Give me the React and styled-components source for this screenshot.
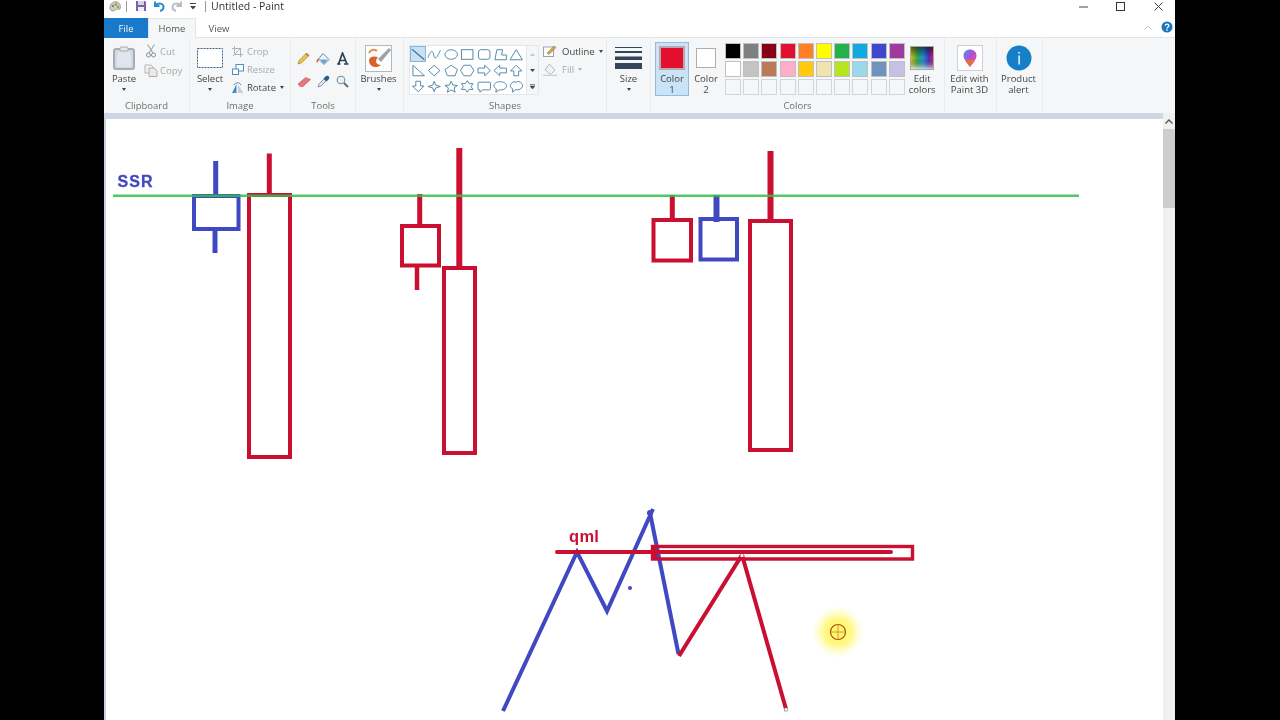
import styled, { createGlobalStyle } from 'styled-components';

const GlobalStyle = createGlobalStyle`
html, body {
  margin: 0;
  padding: 0;
  background: #000;
  overflow: hidden;
}
`

const Page = styled.div`
width: 1280px;
height: 720px;
background: #000;
overflow: hidden;
padding-left: 104px;
box-sizing: border-box;
`
const Window = styled.div`
width: 1071px;
height: 720px;
display: flex;
flex-direction: column;
background: #fff;
font-family: 'Open Sans', 'Liberation Sans', sans-serif;
font-size: 9.5px;
color: #444;
filter: blur(0.45px);
`
const TitleBar = styled.div`
height: 14px;
box-sizing: border-box;
padding: 0 0 2px 5px;
display: flex;
align-items: center;
flex: none;
`
const QuickIcon = styled.span`
display: flex;
width: ${p => p.$w || 18}px;
justify-content: center;
`
const TitleSep = styled.span`
width: 1px;
height: 11px;
background: #9a9a9a;
margin: 0 ${p => p.$m || 4}px;
`
const TitleText = styled.span`
font-size: 10.5px;
color: #333;
`
const WinControls = styled.div`
margin-left: auto;
display: flex;
align-items: center;
gap: 28.5px;
padding-right: 12.5px;
`
const TabRow = styled.div`
height: 24px;
display: flex;
align-items: flex-end;
flex: none;
box-sizing: border-box;
border-bottom: 1px solid #e3e4e5;
`
const FileTab = styled.div`
width: 44px;
height: 20px;
margin-bottom: -1px;
background: #1979ca;
color: #f2f7fc;
display: flex;
align-items: center;
justify-content: center;
`
const Tab = styled.div`
width: ${p => p.$w}px;
height: 20px;
margin-bottom: -1px;
box-sizing: border-box;
display: flex;
align-items: center;
justify-content: center;
color: #555;
background: ${p => (p.$active ? '#f5f6f7' : 'transparent')};
border: 1px solid ${p => (p.$active ? '#e3e4e5' : 'transparent')};
border-bottom: none;
`
const HelpArea = styled.div`
margin-left: auto;
height: 20px;
display: flex;
align-items: center;
gap: 9px;
padding-right: 2px;
`
const Ribbon = styled.div`
height: 75px;
flex: none;
display: flex;
background: #f5f6f7;
`
const Group = styled.div`
width: ${p => p.$w}px;
flex: none;
box-sizing: border-box;
display: flex;
flex-direction: column;
border-right: 1px solid #eaebec;
margin-bottom: 1px;
`
const GroupBody = styled.div`
height: 61px;
display: flex;
`
const GroupLabel = styled.div`
height: 13px;
line-height: 13px;
text-align: center;
color: #6f6f6f;
`
const LargeTool = styled.div`
width: ${p => p.$w || 40}px;
flex: none;
padding-top: 5px;
display: flex;
flex-direction: column;
align-items: center;
`
const IconSlot = styled.div`
height: 30px;
display: flex;
align-items: center;
justify-content: center;
`
const ToolLabel = styled.div`
line-height: 11px;
text-align: center;
color: #444;
white-space: pre-line;
`
const Caret = styled.div`
width: 0;
height: 0;
margin-top: 4px;
border-left: 2.5px solid transparent;
border-right: 2.5px solid transparent;
border-top: 3px solid #444;
`
const SmallCol = styled.div`
display: flex;
flex-direction: column;
gap: ${p => p.$gap || 0}px;
padding-top: 4px;
`
const SmallRow = styled.div`
height: 18px;
display: flex;
align-items: center;
gap: 2px;
color: ${p => (p.$off ? '#a9a9a9' : '#444')};
`
const InlineCaret = styled.span`
width: 0;
height: 0;
margin-left: 2px;
border-left: 2.5px solid transparent;
border-right: 2.5px solid transparent;
border-top: 3px solid ${p => (p.$off ? '#b5b5b5' : '#444')};
`
const ToolGrid = styled.div`
display: grid;
grid-template-columns: repeat(3, 19.5px);
grid-auto-rows: 23px;
padding: 9px 0 0 3px;
`
const GridCell = styled.div`
display: flex;
align-items: center;
justify-content: center;
`
const Gallery = styled.div`
width: 128px;
height: 48px;
margin: 7px 0 0 5px;
display: flex;
background: #fff;
border: 1px solid #e4e6e8;
flex: none;
`
const ShapeGrid = styled.div`
display: grid;
grid-template-columns: repeat(7, 16.4px);
grid-auto-rows: 16px;
`
const ShapeCell = styled.div`
box-sizing: border-box;
display: flex;
align-items: center;
justify-content: center;
background: ${p => (p.$active ? '#c9e0f4' : 'transparent')};
border: 1px solid ${p => (p.$active ? '#86b6dc' : 'transparent')};
`
const Spinner = styled.div`
width: 11px;
margin-left: auto;
display: flex;
flex-direction: column;
border-left: 1px solid #e4e6e8;
background: #f5f6f7;
`
const SpinButton = styled.div`
flex: 1;
display: flex;
align-items: center;
justify-content: center;
`
const ColorButton = styled.div`
width: 34px;
height: 54px;
margin: 4px 0 0 ${p => p.$ml || 0}px;
flex: none;
box-sizing: border-box;
padding-top: ${p => p.$pt}px;
display: flex;
flex-direction: column;
align-items: center;
background: ${p => (p.$active ? '#cbe3f6' : 'transparent')};
border: 1px solid ${p => (p.$active ? '#92bbdc' : 'transparent')};
`
const Swatch = styled.div`
width: ${p => p.$s}px;
height: ${p => p.$s}px;
box-sizing: border-box;
background: ${p => p.$c};
border: ${p => p.$b}px solid ${p => (p.$b > 1 ? '#b9a9ae' : '#adadad')};
margin-bottom: ${p => p.$mb}px;
`
const Palette = styled.div`
display: grid;
grid-template-columns: repeat(10, 16px);
grid-auto-rows: 16px;
gap: 2.2px;
margin: 4.5px 0 0 2px;
flex: none;
`
const PaletteCell = styled.div`
box-sizing: border-box;
background: ${p => p.$c || '#f5f6f7'};
border: 1px solid ${p => (p.$c ? '#c0c0c0' : '#d4d5d6')};
`
const Divider = styled.div`
height: 6px;
flex: none;
width: 1059px;
background: #cfd7e3;
`
const Workspace = styled.div`
flex: 1;
display: flex;
min-height: 0;
`
const Canvas = styled.div`
flex: 1;
background: #fff;
border-left: 2px solid #c9d1de;
overflow: hidden;
`
const Scrollbar = styled.div`
width: 12px;
flex: none;
margin-top: -6px;
position: relative;
display: flex;
flex-direction: column;
background: #f0f0f0;
`
const ScrollArrow = styled.div`
height: 16px;
display: flex;
align-items: center;
justify-content: center;
`
const ScrollThumb = styled.div`
height: 79px;
background: #cdcdcd;
`

const stroke = { fill: 'none', stroke: '#4f86a8', strokeWidth: 1 }

const shapes = [
  <path d="M1 1 L14 12" stroke="#3f7090" strokeWidth="1.2" />,
  <path d="M1 10 C4 1 6 2 7 7 S10 11 14 2" {...stroke} />,
  <ellipse cx="7.5" cy="6.5" rx="6.5" ry="5" {...stroke} />,
  <rect x="1.5" y="1.5" width="12" height="10" {...stroke} />,
  <rect x="1.5" y="1.5" width="12" height="10" rx="2.5" {...stroke} />,
  <path d="M2 12 L4 1.5 H10 L9 7 H14 V12 Z" {...stroke} />,
  <path d="M7.5 1.5 L14 12 H1 Z" {...stroke} />,
  <path d="M2 1 V12 H14 Z" {...stroke} />,
  <path d="M7.5 1 L13.5 6.5 L7.5 12 L1.5 6.5 Z" {...stroke} />,
  <path d="M7.5 1 L14 5.5 L11.5 12 H3.5 L1 5.5 Z" {...stroke} />,
  <path d="M4 1 H11 L14.5 6.5 L11 12 H4 L.5 6.5 Z" {...stroke} />,
  <path d="M1 4 H8 V1 L14 6.5 L8 12 V9 H1 Z" {...stroke} />,
  <path d="M14 4 H7 V1 L1 6.5 L7 12 V9 H14 Z" {...stroke} />,
  <path d="M5 12 V7 H1.5 L7.5 1 L13.5 7 H10 V12 Z" {...stroke} />,
  <path d="M5 1 V6 H1.5 L7.5 12 L13.5 6 H10 V1 Z" {...stroke} />,
  <path d="M7.5 1 L9 5 L14 6.5 L9 8 L7.5 12 L6 8 L1 6.5 L6 5 Z" {...stroke} />,
  <path d="M7.5 1 L9.3 5 L14 5.4 L10.4 8 L11.6 12.5 L7.5 10 L3.4 12.5 L4.6 8 L1 5.4 L5.7 5 Z" {...stroke} />,
  <path d="M7.5 .5 L9.5 3.5 H13.5 L11.5 6.5 L13.5 9.5 H9.5 L7.5 12.5 L5.5 9.5 H1.5 L3.5 6.5 L1.5 3.5 H5.5 Z" {...stroke} />,
  <path d="M2 2 H13 Q14 2 14 3 V9 Q14 10 13 10 H6 L3 12.5 V10 H2 Q1 10 1 9 V3 Q1 2 2 2 Z" {...stroke} />,
  <path d="M7.5 1.5 C11.5 1.5 14 3.5 14 6 C14 8.5 11 10.5 6.5 10 L3 12.5 L3.5 9 C2 8.2 1 7.2 1 6 C1 3.5 3.5 1.5 7.5 1.5 Z" {...stroke} />,
  <path d="M3 3 C4 1 6 1.5 7.5 2 C9 1 12 1 13 3 C14.5 4.5 14.5 7 13 8 C12 10 9 10 7 9.8 L3.5 12.5 L4 9 C1 8 .5 4.5 3 3 Z" {...stroke} />,
]

const row1 = ['#000000', '#7f7f7f', '#880015', '#e2102e', '#ff7f27', '#ffff00', '#22b14c', '#12a9e2', '#3f48cc', '#a03a9e']
const row2 = ['#ffffff', '#c3c3c3', '#b97a57', '#ffaec9', '#ffc90e', '#efe4b0', '#b5e61d', '#99d9ea', '#7092be', '#c8bfe7']
const row3 = Array(10).fill(null)

const Svg = ({ w, h, children }) => (
  <svg width={w} height={h} viewBox={`0 0 ${w} ${h}`}>{children}</svg>
)

const RED = '#cb0f30'
const BLUE = '#4048c2'
const LINE = 4

// outer bounds of each candle body, [x, y, w, h]
const redBoxes = [
  [247, 193, 45, 266],
  [400, 224, 41, 43.5],
  [442, 266, 35, 189],
  [651.5, 218, 41.5, 44.5],
  [748, 219, 45, 233],
]
const blueBoxes = [
  [192, 194, 48.5, 37],
  [698.5, 217, 40.5, 44.5],
]
// wicks, [x, top, bottom, width]
const redWicks = [
  [269.3, 153.5, 194, 5],
  [419.7, 194, 225, 5],
  [417, 267, 290, 4.5],
  [459.3, 148, 267, 6],
  [672.3, 195, 219, 5],
  [770.5, 151, 220, 6],
]
const blueWicks = [
  [215.7, 161, 195, 5],
  [215, 230, 253, 5],
  [716.5, 195, 222, 6],
]

function Chart() {
  return (
    <svg width="1059" height="601" viewBox="106 119 1059 601" style={{ display: 'block' }}>
      <defs>
        <radialGradient id="glow">
          <stop offset="0%" stopColor="#fff56a" />
          <stop offset="50%" stopColor="#fff985" />
          <stop offset="100%" stopColor="#fffde0" stopOpacity="0" />
        </radialGradient>
      </defs>
      {redBoxes.map(([x, y, w, h]) => (
        <rect key={x} x={x + LINE / 2} y={y + LINE / 2} width={w - LINE} height={h - LINE} fill="none" stroke={RED} strokeWidth={LINE} />
      ))}
      {blueBoxes.map(([x, y, w, h]) => (
        <rect key={x} x={x + LINE / 2} y={y + LINE / 2} width={w - LINE} height={h - LINE} fill="none" stroke={BLUE} strokeWidth={LINE} />
      ))}
      {redWicks.map(([x, y1, y2, w]) => (
        <line key={x} x1={x} x2={x} y1={y1} y2={y2} stroke={RED} strokeWidth={w} />
      ))}
      {blueWicks.map(([x, y1, y2, w]) => (
        <line key={y1} x1={x} x2={x} y1={y1} y2={y2} stroke={BLUE} strokeWidth={w} />
      ))}
      <line x1="113" x2="1079" y1="195.8" y2="195.8" stroke="#34c04c" strokeWidth="2.6" strokeOpacity="0.85" />
      <text x="117.5" y="187" fontFamily="'Liberation Sans', sans-serif" fontWeight="700" fontSize="16" letterSpacing="1.1" fill={BLUE} stroke={BLUE} strokeWidth=".3">SSR</text>

      <text x="569" y="541.5" fontFamily="'Liberation Sans', sans-serif" fontWeight="700" fontSize="16.5" letterSpacing=".3" fill={RED}>qml</text>
      <polyline points="503,711 577,552 607,611 653,509" fill="none" stroke={BLUE} strokeWidth="4" />
      <polyline points="650,513 678.5,654" fill="none" stroke={BLUE} strokeWidth="4" />
      <circle cx="650" cy="513" r="3" fill={BLUE} />
      <circle cx="630" cy="588" r="2" fill={BLUE} />
      <rect x="652.5" y="546.5" width="260" height="12.5" fill="none" stroke={RED} strokeWidth="3.4" />
      <rect x="651" y="545" width="6" height="14" fill={RED} />
      <line x1="557" x2="891" y1="552" y2="552" stroke={RED} strokeWidth="4" strokeLinecap="round" />
      <polyline points="679,656 742,555 786,709" fill="none" stroke={RED} strokeWidth="4" />
      <rect x="740.5" y="554" width="3" height="3" fill="#fff" />
      <rect x="784.5" y="708" width="3" height="3" fill="#fff" stroke="#777" strokeWidth=".6" />

      <circle cx="838" cy="632" r="27" fill="url(#glow)" />
      <circle cx="838" cy="632" r="7.5" fill="none" stroke="#a8500f" strokeWidth="1.2" />
      <path d="M838 624.5 V639.5 M830.5 632 H845.5" stroke="#c98a20" strokeWidth=".8" />
    </svg>
  )
}

export default function App() {
  return (
    <Page>
      <GlobalStyle />
      <Window>
        <TitleBar>
          <QuickIcon $w={12}>
            <Svg w={12} h={12}>
              <path d="M1 8 C1 3 5 1 8 2 C11 3 12 6 11 9 C9 10 8 8 6 10 C4 12 1 11 1 8 Z" fill="#d9cfa5" stroke="#7d8a96" strokeWidth=".8" />
              <circle cx="4" cy="6" r="1.2" fill="#3b9ad0" />
              <circle cx="7" cy="4.5" r="1.2" fill="#e2733b" />
              <circle cx="9" cy="7" r="1.1" fill="#58a55c" />
            </Svg>
          </QuickIcon>
          <TitleSep $m={5} />
          <QuickIcon>
            <Svg w={12} h={12}>
              <path d="M1 1 H10 L11 2 V11 H1 Z" fill="#7a62a8" />
              <rect x="3" y="1" width="6" height="4" fill="#d9d3e6" />
              <rect x="3" y="7" width="6" height="4" fill="#efedf4" />
            </Svg>
          </QuickIcon>
          <QuickIcon>
            <Svg w={12} h={12}>
              <path d="M2 1.5 V6 H6.5 M2.5 5.5 C5 2.5 10.5 3 10.5 7 C10.5 9 9 10.5 7 11" fill="none" stroke="#2a8ccc" strokeWidth="2" />
            </Svg>
          </QuickIcon>
          <QuickIcon>
            <Svg w={12} h={12}>
              <path d="M10 1.5 V6 H5.5 M9.5 5.5 C7 2.5 1.5 3 1.5 7 C1.5 9 3 10.5 5 11" fill="none" stroke="#b6c0c8" strokeWidth="2" />
            </Svg>
          </QuickIcon>
          <QuickIcon $w={14}>
            <Svg w={8} h={9}>
              <path d="M1 1.5 H7" stroke="#444" strokeWidth="1" />
              <path d="M1 4 H7 L4 7.5 Z" fill="#444" />
            </Svg>
          </QuickIcon>
          <TitleSep $m={5} />
          <TitleText>Untitled - Paint</TitleText>
          <WinControls>
            <Svg w={9} h={9}><path d="M0 5 H9" stroke="#444" /></Svg>
            <Svg w={9} h={9}><rect x=".5" y=".5" width="8" height="8" fill="none" stroke="#333" /></Svg>
            <Svg w={9} h={9}><path d="M.5 .5 L8.5 8.5 M8.5 .5 L.5 8.5" stroke="#444" /></Svg>
          </WinControls>
        </TitleBar>

        <TabRow>
          <FileTab>File</FileTab>
          <Tab $w={48} $active>Home</Tab>
          <Tab $w={46}>View</Tab>
          <HelpArea>
            <Svg w={8} h={5}><path d="M.5 4.5 L4 1 L7.5 4.5" fill="none" stroke="#c4c4c4" /></Svg>
            <Svg w={12} h={12}>
              <circle cx="6" cy="6" r="5.5" fill="#1b75bc" />
              <path d="M4.2 4.7 C4.2 2.6 7.9 2.6 7.9 4.7 C7.9 6 6 6 6 7.4" fill="none" stroke="#fff" strokeWidth="1.3" />
              <rect x="5.3" y="8.3" width="1.4" height="1.4" fill="#fff" />
            </Svg>
          </HelpArea>
        </TabRow>

        <Ribbon>
          <Group $w={86}>
            <GroupBody>
              <LargeTool>
                <IconSlot>
                  <Svg w={24} h={24}>
                    <rect x="2" y="3" width="20" height="20" rx="2" fill="#cfd9e4" stroke="#a9adb2" strokeWidth="2" />
                    <rect x="5" y="6" width="14" height="15" fill="#dde5ee" />
                    <rect x="8" y="1" width="8" height="4" rx="1" fill="#e6e6e6" stroke="#a9adb2" />
                  </Svg>
                </IconSlot>
                <ToolLabel>Paste</ToolLabel>
                <Caret />
              </LargeTool>
              <SmallCol $gap={1}>
                <SmallRow $off>
                  <QuickIcon $w={14}>
                    <Svg w={10} h={14}>
                      <path d="M1.5 .5 L7 9 M8.5 .5 L3 9" stroke="#a7a7a7" strokeWidth="1.2" />
                      <circle cx="2.5" cy="11" r="2" fill="none" stroke="#8f8f8f" />
                      <circle cx="7.5" cy="11" r="2" fill="none" stroke="#8f8f8f" />
                    </Svg>
                  </QuickIcon>
                  Cut
                </SmallRow>
                <SmallRow $off>
                  <QuickIcon $w={14}>
                    <Svg w={14} h={13}>
                      <path d="M1 1 H7 L9 3 V9 H1 Z" fill="#f2f2f2" stroke="#b5b5b5" />
                      <path d="M5 4 H10 L13 6.5 V12.5 H5 Z" fill="#e9e9e9" stroke="#b0b0b0" />
                    </Svg>
                  </QuickIcon>
                  Copy
                </SmallRow>
              </SmallCol>
            </GroupBody>
            <GroupLabel>Clipboard</GroupLabel>
          </Group>

          <Group $w={101}>
            <GroupBody>
              <LargeTool>
                <IconSlot>
                  <Svg w={26} h={20}>
                    <rect x=".5" y=".5" width="25" height="19" fill="#fff" stroke="#3f6387" strokeDasharray="2 1" />
                  </Svg>
                </IconSlot>
                <ToolLabel>Select</ToolLabel>
                <Caret />
              </LargeTool>
              <SmallCol>
                <SmallRow $off>
                  <QuickIcon $w={15}>
                    <Svg w={11} h={11}>
                      <path d="M2.5 0 V8.5 H11 M0 2.5 H8.5 V11 M1 10 L9 2" fill="none" stroke="#a8b4bd" />
                    </Svg>
                  </QuickIcon>
                  Crop
                </SmallRow>
                <SmallRow $off>
                  <QuickIcon $w={15}>
                    <Svg w={12} h={11}>
                      <rect x="4" y=".5" width="7.5" height="6.5" fill="#fff" stroke="#4f8fbe" />
                      <rect x=".5" y="5" width="6" height="5.5" fill="#fff" stroke="#4f8fbe" />
                    </Svg>
                  </QuickIcon>
                  Resize
                </SmallRow>
                <SmallRow>
                  <QuickIcon $w={15}>
                    <Svg w={13} h={11}>
                      <path d="M1 11 L5.5 2 V11 Z" fill="#3b8ec6" />
                      <path d="M7 11 V3 L12.5 11 Z" fill="#c7cfd6" />
                      <path d="M3 3 C4.5 0 8.5 0 10 3" fill="none" stroke="#5a7f9c" />
                    </Svg>
                  </QuickIcon>
                  Rotate
                  <InlineCaret />
                </SmallRow>
              </SmallCol>
            </GroupBody>
            <GroupLabel>Image</GroupLabel>
          </Group>

          <Group $w={65}>
            <GroupBody>
              <ToolGrid>
                <GridCell>
                  <Svg w={13} h={13}>
                    <path d="M1 12 L2 8.5 L9.5 1 L12 3.5 L4.5 11 Z" fill="#e9c24c" stroke="#a08a3a" strokeWidth=".7" />
                    <path d="M9.5 1 L12 3.5 L11 4.5 L8.5 2 Z" fill="#d9655a" />
                  </Svg>
                </GridCell>
                <GridCell>
                  <Svg w={14} h={14}>
                    <path d="M7 1.5 L13 7.5 L8 12.5 L2.5 7 Z" fill="#eef2f6" stroke="#76899b" />
                    <path d="M4 7.5 H11.5 L8 12 Z" fill="#55a9dd" />
                    <path d="M2.5 6.5 C.5 7 0 9.5 1 11 C2 9.5 3 8.5 3 7" fill="#d8613c" />
                  </Svg>
                </GridCell>
                <GridCell>
                  <Svg w={13} h={13}>
                    <path d="M1 12 H4.5 M8 12 H12.5 M2.5 12 L6.5 1 L11 12 M4 8.5 H9.5" fill="none" stroke="#2e4255" strokeWidth="1.7" />
                  </Svg>
                </GridCell>
                <GridCell>
                  <Svg w={14} h={12}>
                    <path d="M1 8 L8.5 1.5 L13.5 3.5 L6 10.5 H3 Z" fill="#e4787c" stroke="#c8585e" strokeWidth=".6" />
                  </Svg>
                </GridCell>
                <GridCell>
                  <Svg w={13} h={13}>
                    <path d="M1 12 L2 9 L7 4 L9 6 L4 11 Z" fill="#dfe7ee" stroke="#6d8296" strokeWidth=".8" />
                    <path d="M6.5 3.5 L9 1 Q11 .3 12 1.5 Q12.7 3 12 4 L9.5 6.5 Z" fill="#245f93" />
                  </Svg>
                </GridCell>
                <GridCell>
                  <Svg w={13} h={13}>
                    <circle cx="5" cy="5" r="3.8" fill="#eaf3fa" stroke="#6f8ba0" strokeWidth="1.1" />
                    <path d="M8 8 L12 12" stroke="#55697a" strokeWidth="1.8" />
                  </Svg>
                </GridCell>
              </ToolGrid>
            </GroupBody>
            <GroupLabel>Tools</GroupLabel>
          </Group>

          <Group $w={48}>
            <GroupBody>
              <LargeTool $w={45}>
                <IconSlot>
                  <Svg w={27} h={27}>
                    <rect x=".5" y=".5" width="26" height="26" fill="#fdfdfd" stroke="#b7b7b7" />
                    <path d="M4 15 C4 22 11 24 16 20 C12 20 9 17 13 12 C9 11 5 11 4 15 Z" fill="#d9622b" />
                    <path d="M4 8 C6 4 10 4 12 6" fill="none" stroke="#e58a50" strokeWidth="2" />
                    <path d="M13 14 L24 3 L26 5 L16 17 Z" fill="#9aa3ad" />
                  </Svg>
                </IconSlot>
                <ToolLabel>Brushes</ToolLabel>
                <Caret />
              </LargeTool>
            </GroupBody>
            <GroupLabel />
          </Group>

          <Group $w={203}>
            <GroupBody>
              <Gallery>
                <ShapeGrid>
                  {shapes.map((s, i) => (
                    <ShapeCell key={i} $active={i === 0}>
                      <svg width="15" height="13" viewBox="0 0 15 13">{s}</svg>
                    </ShapeCell>
                  ))}
                </ShapeGrid>
                <Spinner>
                  <SpinButton>
                    <Svg w={5} h={3}><path d="M0 3 L2.5 0 L5 3 Z" fill="#c8c8c8" /></Svg>
                  </SpinButton>
                  <SpinButton>
                    <Svg w={5} h={3}><path d="M0 0 L2.5 3 L5 0 Z" fill="#444" /></Svg>
                  </SpinButton>
                  <SpinButton>
                    <Svg w={5} h={5}><path d="M0 .5 H5 M0 2 L2.5 5 L5 2 Z" fill="#444" stroke="#444" strokeWidth=".6" /></Svg>
                  </SpinButton>
                </Spinner>
              </Gallery>
              <SmallCol>
                <SmallRow>
                  <QuickIcon $w={21}>
                    <Svg w={14} h={12}>
                      <rect x=".5" y="2" width="10" height="9.5" fill="#fff" stroke="#8ea7b8" />
                      <path d="M4 8 L11 1 L13 2.5 L6 9.5 Z" fill="#d9a63f" stroke="#7b6a3a" strokeWidth=".5" />
                    </Svg>
                  </QuickIcon>
                  Outline
                  <InlineCaret />
                </SmallRow>
                <SmallRow $off>
                  <QuickIcon $w={21}>
                    <Svg w={14} h={13}>
                      <path d="M6.5 1 L12 7 L7.5 11.5 L2 6.5 Z" fill="#eef1f5" stroke="#a9b8c5" />
                      <path d="M0 12.5 H14" stroke="#c3d0dc" strokeWidth="1.5" />
                    </Svg>
                  </QuickIcon>
                  Fill
                  <InlineCaret $off />
                </SmallRow>
              </SmallCol>
            </GroupBody>
            <GroupLabel>Shapes</GroupLabel>
          </Group>

          <Group $w={44}>
            <GroupBody>
              <LargeTool $w={43}>
                <IconSlot>
                  <Svg w={27} h={24}>
                    <rect x="0" y="1" width="27" height="1" fill="#35465a" />
                    <rect x="0" y="5" width="27" height="2" fill="#35465a" />
                    <rect x="0" y="10.5" width="27" height="3.5" fill="#35465a" />
                    <rect x="0" y="17" width="27" height="6" fill="#35465a" />
                  </Svg>
                </IconSlot>
                <ToolLabel>Size</ToolLabel>
                <Caret />
              </LargeTool>
            </GroupBody>
            <GroupLabel />
          </Group>

          <Group $w={294}>
            <GroupBody>
              <ColorButton $ml={4} $pt={3} $active>
                <Swatch $s={26} $b={2} $c="#e2102e" $mb={3} />
                <ToolLabel>{'Color\n1'}</ToolLabel>
              </ColorButton>
              <ColorButton $pt={5}>
                <Swatch $s={20} $b={1} $c="#fff" $mb={5} />
                <ToolLabel>{'Color\n2'}</ToolLabel>
              </ColorButton>
              <Palette>
                {[...row1, ...row2, ...row3].map((c, i) => (
                  <PaletteCell key={i} $c={c} />
                ))}
              </Palette>
              <LargeTool $w={35}>
                <IconSlot>
                  <Svg w={24} h={24}>
                    <defs>
                      <linearGradient id="rainbow" x1="0" x2="1" y1="0" y2="0">
                        <stop offset="0" stopColor="#f0c010" />
                        <stop offset=".3" stopColor="#30b050" />
                        <stop offset=".55" stopColor="#2090e0" />
                        <stop offset=".8" stopColor="#5030c0" />
                        <stop offset="1" stopColor="#e02060" />
                      </linearGradient>
                      <linearGradient id="shade" x1="0" x2="0" y1="0" y2="1">
                        <stop offset="0" stopColor="#000" stopOpacity=".55" />
                        <stop offset=".5" stopColor="#000" stopOpacity="0" />
                        <stop offset="1" stopColor="#fff" stopOpacity=".7" />
                      </linearGradient>
                    </defs>
                    <rect x=".5" y=".5" width="23" height="23" fill="url(#rainbow)" stroke="#aaa7a0" />
                    <rect x="1" y="1" width="22" height="22" fill="url(#shade)" />
                  </Svg>
                </IconSlot>
                <ToolLabel>{'Edit\ncolors'}</ToolLabel>
              </LargeTool>
            </GroupBody>
            <GroupLabel>Colors</GroupLabel>
          </Group>

          <Group $w={52}>
            <GroupBody>
              <LargeTool $w={49}>
                <IconSlot>
                  <Svg w={26} h={26}>
                    <defs>
                      <linearGradient id="drop" x1="0" x2="1" y1="0" y2="1">
                        <stop offset="0" stopColor="#3aa0e8" />
                        <stop offset=".45" stopColor="#b050d8" />
                        <stop offset="1" stopColor="#f0508a" />
                      </linearGradient>
                    </defs>
                    <rect x=".5" y=".5" width="25" height="25" fill="#fff" stroke="#cfd0d2" />
                    <path d="M13 22 C10 18 6.5 14.5 6.5 10.5 C6.5 7 9.5 4.5 13 4.5 C16.5 4.5 19.5 7 19.5 10.5 C19.5 14.5 16 18 13 22 Z" fill="url(#drop)" />
                    <path d="M13 22 C11 19 9 16.5 8 14 C11 15.5 15 15.5 18 14 C17 16.5 15 19 13 22 Z" fill="#e8703a" />
                  </Svg>
                </IconSlot>
                <ToolLabel>{'Edit with\nPaint 3D'}</ToolLabel>
              </LargeTool>
            </GroupBody>
            <GroupLabel />
          </Group>

          <Group $w={46}>
            <GroupBody>
              <LargeTool $w={43}>
                <IconSlot>
                  <Svg w={26} h={26}>
                    <circle cx="13" cy="13" r="12.5" fill="#1580c8" />
                    <rect x="12.4" y="10.5" width="1.4" height="9" fill="#fff" />
                    <rect x="12.4" y="7" width="1.4" height="1.6" fill="#fff" />
                  </Svg>
                </IconSlot>
                <ToolLabel>{'Product\nalert'}</ToolLabel>
              </LargeTool>
            </GroupBody>
            <GroupLabel />
          </Group>
        </Ribbon>

        <Divider />
        <Workspace>
          <Canvas>
            <Chart />
          </Canvas>
          <Scrollbar>
            <ScrollArrow>
              <Svg w={8} h={5}><path d="M.5 4.5 L4 1 L7.5 4.5" fill="none" stroke="#555" strokeWidth="1.4" /></Svg>
            </ScrollArrow>
            <ScrollThumb />
          </Scrollbar>
        </Workspace>
      </Window>
    </Page>
  )
}
